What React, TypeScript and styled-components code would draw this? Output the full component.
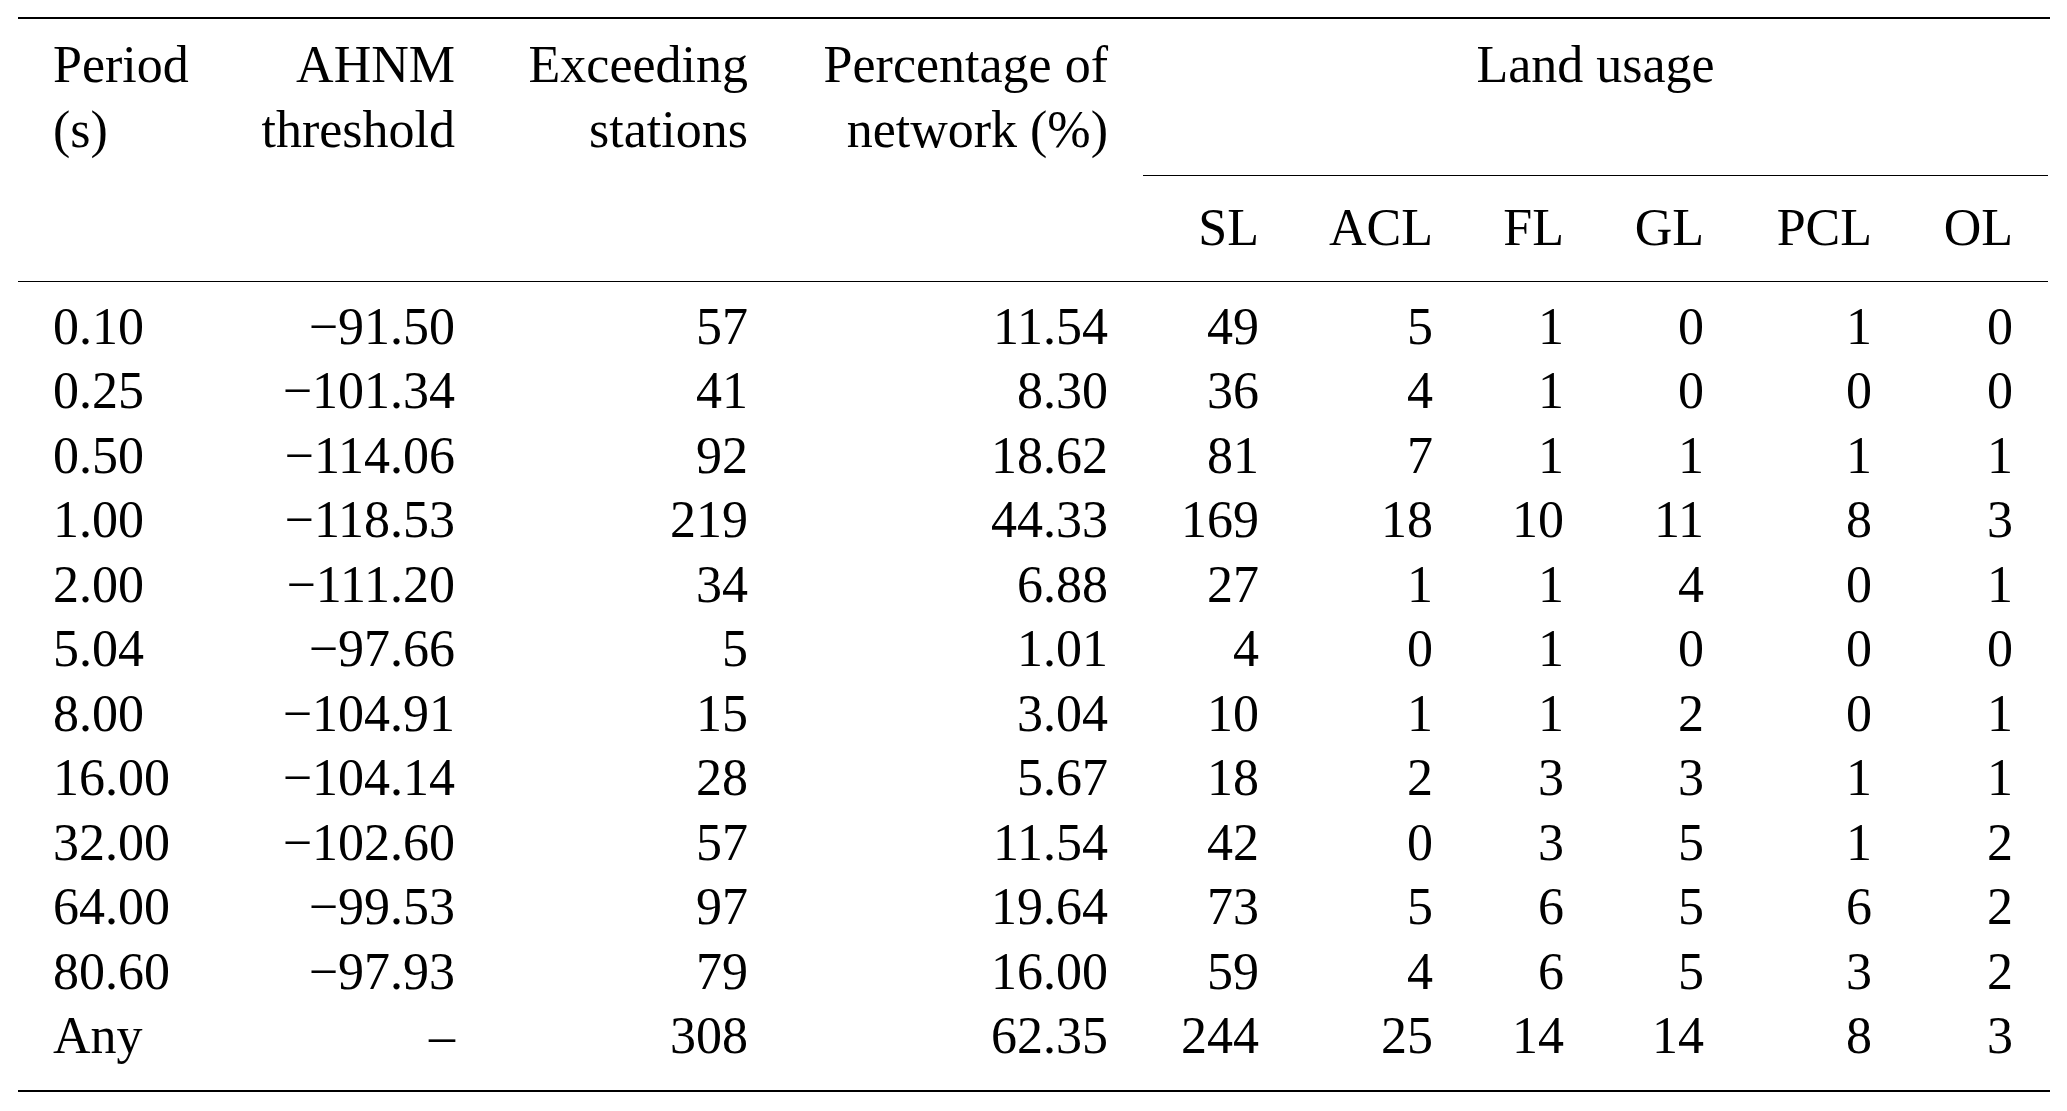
import styled, { createGlobalStyle } from "styled-components";

const GlobalStyle = createGlobalStyle`
  *, *::before, *::after {
    box-sizing: border-box;
  }
  body {
    margin: 0;
    background: #ffffff;
  }
`;

// column boxes, each holding 35px of padding on both sides
const COLUMNS = "207px 265px 293px 360px 151px 174px 131px 140px 168px 141px";

const Page = styled.div`
  padding: 17px 0 0 18px;
`;

const Table = styled.div`
  width: 2032px;
  padding-right: 2px;
  border-top: 2px solid #000;
  border-bottom: 2px solid #000;
  font-family: "Liberation Serif", "Times New Roman", serif;
  font-size: 52px;
  color: #000;
`;

const Head = styled.div`
  display: grid;
  grid-template-columns: ${COLUMNS};
  grid-template-rows: 156.5px 105.5px;
  border-bottom: 1.5px solid #000;
`;

const HeadCell = styled.div<{ $left?: boolean }>`
  grid-row: 1 / span 2;
  padding: 12.7px 35px 0;
  line-height: 65px;
  text-align: ${(p) => (p.$left ? "left" : "right")};
  white-space: nowrap;
`;

const GroupCell = styled.div`
  grid-row: 1;
  grid-column: 5 / -1;
  padding-top: 12.7px;
  line-height: 65px;
  text-align: center;
  border-bottom: 1.5px solid #000;
`;

const SubCell = styled.div`
  grid-row: 2;
  padding: 19.5px 35px 0;
  line-height: 65px;
  text-align: right;
`;

const Body = styled.div`
  display: grid;
  grid-template-columns: ${COLUMNS};
  grid-auto-rows: 64.5px;
  padding: 12.7px 0 21.8px;
`;

const Cell = styled.div<{ $left?: boolean }>`
  padding: 0 35px;
  line-height: 64.5px;
  text-align: ${(p) => (p.$left ? "left" : "right")};
  white-space: nowrap;
`;

const landColumns = ["SL", "ACL", "FL", "GL", "PCL", "OL"];

const rows: string[][] = [
  ["0.10", "−91.50", "57", "11.54", "49", "5", "1", "0", "1", "0"],
  ["0.25", "−101.34", "41", "8.30", "36", "4", "1", "0", "0", "0"],
  ["0.50", "−114.06", "92", "18.62", "81", "7", "1", "1", "1", "1"],
  ["1.00", "−118.53", "219", "44.33", "169", "18", "10", "11", "8", "3"],
  ["2.00", "−111.20", "34", "6.88", "27", "1", "1", "4", "0", "1"],
  ["5.04", "−97.66", "5", "1.01", "4", "0", "1", "0", "0", "0"],
  ["8.00", "−104.91", "15", "3.04", "10", "1", "1", "2", "0", "1"],
  ["16.00", "−104.14", "28", "5.67", "18", "2", "3", "3", "1", "1"],
  ["32.00", "−102.60", "57", "11.54", "42", "0", "3", "5", "1", "2"],
  ["64.00", "−99.53", "97", "19.64", "73", "5", "6", "5", "6", "2"],
  ["80.60", "−97.93", "79", "16.00", "59", "4", "6", "5", "3", "2"],
  ["Any", "–", "308", "62.35", "244", "25", "14", "14", "8", "3"],
];

const App = () => {
  return (
    <Page>
      <GlobalStyle />
      <Table>
        <Head>
          <HeadCell $left>
            Period
            <br />
            (s)
          </HeadCell>
          <HeadCell>
            AHNM
            <br />
            threshold
          </HeadCell>
          <HeadCell>
            Exceeding
            <br />
            stations
          </HeadCell>
          <HeadCell>
            Percentage of
            <br />
            network (%)
          </HeadCell>
          <GroupCell>Land usage</GroupCell>
          {landColumns.map((name) => (
            <SubCell key={name}>{name}</SubCell>
          ))}
        </Head>
        <Body>
          {rows.map((row, r) =>
            row.map((value, c) => (
              <Cell key={`${r}-${c}`} $left={c === 0}>
                {value}
              </Cell>
            ))
          )}
        </Body>
      </Table>
    </Page>
  );
};

export default App;
